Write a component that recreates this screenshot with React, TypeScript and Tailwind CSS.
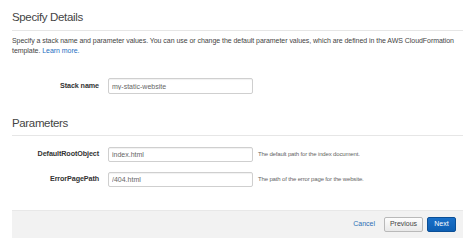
import React from 'react'

const fieldClass =
  "w-[145px] rounded-[2px] border border-[#cfcfcf] bg-white pl-[3px] text-[7px] text-[#666] shadow-[inset_0_1px_1px_rgba(0,0,0,0.06)] outline-none font-['Liberation_Sans',sans-serif]"

const Field = ({ label, value, help, tall }: { label: string; value: string; help?: string; tall?: boolean }) => (
  <div className="flex items-center">
    <label className="w-[87px] text-right text-[7.2px] tracking-[-0.1px] font-bold text-[#333]">{label}</label>
    <input readOnly value={value} className={`${fieldClass} ml-[9px] ${tall ? 'h-[16px]' : 'h-[15px]'}`} />
    {help && <span className="ml-[5px] text-[6px] tracking-[-0.15px] text-[#666]">{help}</span>}
  </div>
)

export default function App() {
  return (
    <div className="w-[474px] h-[248px] bg-white pl-[12px] pr-[11px] font-['Liberation_Sans',sans-serif]">
      <h2 className="pt-[8px] pb-[4px] text-[11.5px] tracking-[-0.35px] leading-[18px] text-[#444] border-b border-[#e6e6e6]">Specify Details</h2>
      <p className="mt-[5px] text-[7px] tracking-[-0.05px] leading-[10px] text-[#444]">
        Specify a stack name and parameter values. You can use or change the default parameter values, which are defined in the AWS CloudFormation template.{' '}
        <a className="text-[#1f6fbf]">Learn more.</a>
      </p>

      <div className="mt-[22px]">
        <Field label="Stack name" value="my-static-website" tall />
      </div>

      <h2 className="mt-[21px] pb-[4px] text-[11.5px] tracking-[-0.35px] leading-[16px] text-[#444] border-b border-[#e6e6e6]">Parameters</h2>

      <div className="mt-[11px] flex flex-col gap-[10px]">
        <Field label="DefaultRootObject" value="index.html" help="The default path for the index document." />
        <Field label="ErrorPagePath" value="/404.html" help="The path of the error page for the website." />
      </div>

      <div className="mt-[23px] h-[28px] bg-[#f2f2f2] border-t border-[#e8e8e8] flex items-center justify-end pr-[7px]">
        <a className="text-[7px] text-[#2e6fb5] mr-[9px]">Cancel</a>
        <button className="h-[15px] w-[39px] rounded-[2px] border border-[#b9b9b9] bg-gradient-to-b from-[#fdfdfd] to-[#e9e9e9] text-[7px] text-[#444] mr-[4px]">Previous</button>
        <button className="h-[15px] w-[29px] rounded-[2px] border border-[#0b4f96] bg-gradient-to-b from-[#1a70c8] to-[#0d5fb3] text-[7px] text-white">Next</button>
      </div>
    </div>
  )
}
